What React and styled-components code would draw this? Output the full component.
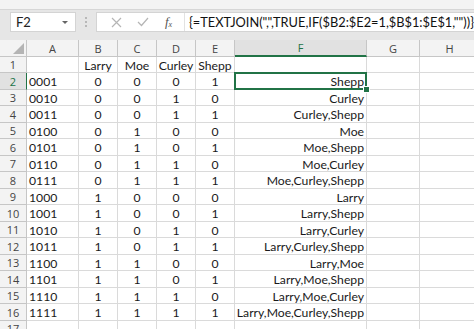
import React from 'react';
import styled, { createGlobalStyle, css } from 'styled-components';

const GlobalStyle = createGlobalStyle`
  html, body {
    margin: 0;
    padding: 0;
    background: #ffffff;
    overflow: hidden;
  }
`;

const names = ['Larry', 'Moe', 'Curley', 'Shepp'];
const colLetters = ['A', 'B', 'C', 'D', 'E', 'F', 'G', 'H'];

const rows = Array.from({ length: 15 }, (_, i) => {
  const bits = (i + 1).toString(2).padStart(4, '0');
  const joined = names.filter((_, k) => bits[k] === '1').join(',');
  return { code: bits, bits: bits.split(''), joined };
});

const Window = styled.div`
  width: 474px;
  height: 329px;
  overflow: hidden;
  display: flex;
  flex-direction: column;
  background: #e6e6e6;
  font-family: Lato, 'Liberation Sans', sans-serif;
`;

const TopStrip = styled.div`
  height: 10px;
  background: #f3f3f3;
  border-bottom: 1px solid #d6d6d6;
  box-sizing: border-box;
  flex-shrink: 0;
`;

const FormulaBar = styled.div`
  height: 30px;
  flex-shrink: 0;
  display: flex;
  align-items: flex-start;
  padding-top: 2px;
  box-sizing: border-box;
`;

const NameBox = styled.div`
  margin-left: 10px;
  width: 83px;
  height: 20px;
  box-sizing: border-box;
  background: #fff;
  border: 1px solid #d4d4d4;
  display: flex;
  align-items: center;
  justify-content: space-between;
  padding: 0 5px 0 5px;
  font-size: 13px;
  color: #222;
`;

const Caret = styled.span`
  width: 0;
  height: 0;
  border-left: 3px solid transparent;
  border-right: 3px solid transparent;
  border-top: 3px solid #666;
  margin-right: 2px;
`;

const Grip = styled.div`
  width: 27px;
  height: 20px;
  display: flex;
  flex-direction: column;
  align-items: center;
  justify-content: center;
  gap: 2px;
  span {
    width: 2px;
    height: 2px;
    background: #b8b8b8;
  }
`;

const FormulaBox = styled.div`
  flex: 1;
  height: 20px;
  display: flex;
  background: #fff;
  border: 1px solid #d4d4d4;
  border-right: none;
  box-sizing: border-box;
`;

const Buttons = styled.div`
  width: 88px;
  display: flex;
  align-items: center;
  justify-content: space-around;
  padding: 0 4px 0 6px;
  box-sizing: border-box;
  border-right: 1px solid #e2e2e2;
`;

const Fx = styled.span`
  font-family: 'Liberation Serif', serif;
  font-style: italic;
  font-size: 13px;
  color: #555;
  sub {
    font-size: 8px;
    vertical-align: -1px;
  }
`;

const FormulaText = styled.div`
  padding-left: 4px;
  font-size: 12.8px;
  line-height: 18px;
  color: #111;
  white-space: nowrap;
`;

const Sheet = styled.div`
  flex: 1;
  background: #fff;
  display: grid;
  grid-template-columns: 27px 52px 39px 39px 39px 39px 132px 53px 60px;
  grid-template-rows: 17px repeat(8, 16px 17px) 16px;
  overflow: hidden;
`;

const Cell = styled.div`
  box-sizing: border-box;
  border-right: 1px solid #dadada;
  border-bottom: 1px solid #dadada;
  font-size: 12.2px;
  color: #1a1a1a;
  display: flex;
  align-items: center;
  padding: 1px 2px 0;
  white-space: nowrap;
  justify-content: ${(p) =>
    p.$align === 'right' ? 'flex-end' : p.$align === 'left' ? 'flex-start' : 'center'};
  position: relative;
`;

const HeadCell = styled.div`
  box-sizing: border-box;
  background: ${(p) => (p.$active ? '#e1e1e1' : '#f3f3f3')};
  border-right: 1px solid ${(p) => (p.$active && p.$row ? '#217346' : '#c6c6c6')};
  border-bottom: 1px solid #c6c6c6;
  font-family: 'Open Sans', 'Noto Sans', sans-serif;
  font-size: 11px;
  color: ${(p) => (p.$active ? '#217346' : '#444')};
  display: flex;
  align-items: center;
  justify-content: center;
  ${(p) =>
    p.$active &&
    !p.$row &&
    css`
      border-bottom: 2px solid #217346;
    `}
`;

const Corner = styled(HeadCell)`
  position: relative;
  &::after {
    content: '';
    position: absolute;
    right: 2px;
    bottom: 2px;
    border-left: 11px solid transparent;
    border-bottom: 11px solid #b4b4b4;
  }
`;

const Selection = styled.div`
  position: absolute;
  left: -1px;
  top: -1px;
  right: -1px;
  bottom: -1px;
  border: 2px solid #217346;
  pointer-events: none;
  z-index: 2;
`;

const FillHandle = styled.div`
  position: absolute;
  right: -4px;
  bottom: -4px;
  width: 5px;
  height: 5px;
  background: #217346;
  border: 1px solid #fff;
  z-index: 3;
`;

const CrossIcon = () => (
  <svg width="11" height="11" viewBox="0 0 11 11">
    <path d="M1 1 L10 10 M10 1 L1 10" stroke="#b5b5b5" strokeWidth="1.2" fill="none" />
  </svg>
);

const CheckIcon = () => (
  <svg width="12" height="10" viewBox="0 0 12 10">
    <path d="M1 5 L4.5 8.5 L11 1" stroke="#b5b5b5" strokeWidth="1.2" fill="none" />
  </svg>
);

const App = () => (
  <>
    <GlobalStyle />
    <Window>
      <TopStrip />
      <FormulaBar>
        <NameBox>
          F2
          <Caret />
        </NameBox>
        <Grip>
          <span />
          <span />
          <span />
        </Grip>
        <FormulaBox>
          <Buttons>
            <CrossIcon />
            <CheckIcon />
            <Fx>
              f<sub>x</sub>
            </Fx>
          </Buttons>
          <FormulaText>{'{=TEXTJOIN(",",TRUE,IF($B2:$E2=1,$B$1:$E$1,""))}'}</FormulaText>
        </FormulaBox>
      </FormulaBar>
      <Sheet>
        <Corner />
        {colLetters.map((c) => (
          <HeadCell key={c} $active={c === 'F'}>
            {c}
          </HeadCell>
        ))}

        <HeadCell $row>1</HeadCell>
        <Cell />
        {names.map((n) => (
          <Cell key={n}>{n}</Cell>
        ))}
        <Cell />
        <Cell />
        <Cell />

        {rows.map((r, i) => (
          <React.Fragment key={r.code}>
            <HeadCell $row $active={i === 0}>
              {i + 2}
            </HeadCell>
            <Cell $align="left">{r.code}</Cell>
            {r.bits.map((b, k) => (
              <Cell key={k}>{b}</Cell>
            ))}
            <Cell $align="right">
              {r.joined}
              {i === 0 && (
                <>
                  <Selection />
                  <FillHandle />
                </>
              )}
            </Cell>
            <Cell />
            <Cell />
          </React.Fragment>
        ))}

        <HeadCell $row>17</HeadCell>
        {Array.from({ length: 8 }, (_, k) => (
          <Cell key={k} />
        ))}
      </Sheet>
    </Window>
  </>
);

export default App;
